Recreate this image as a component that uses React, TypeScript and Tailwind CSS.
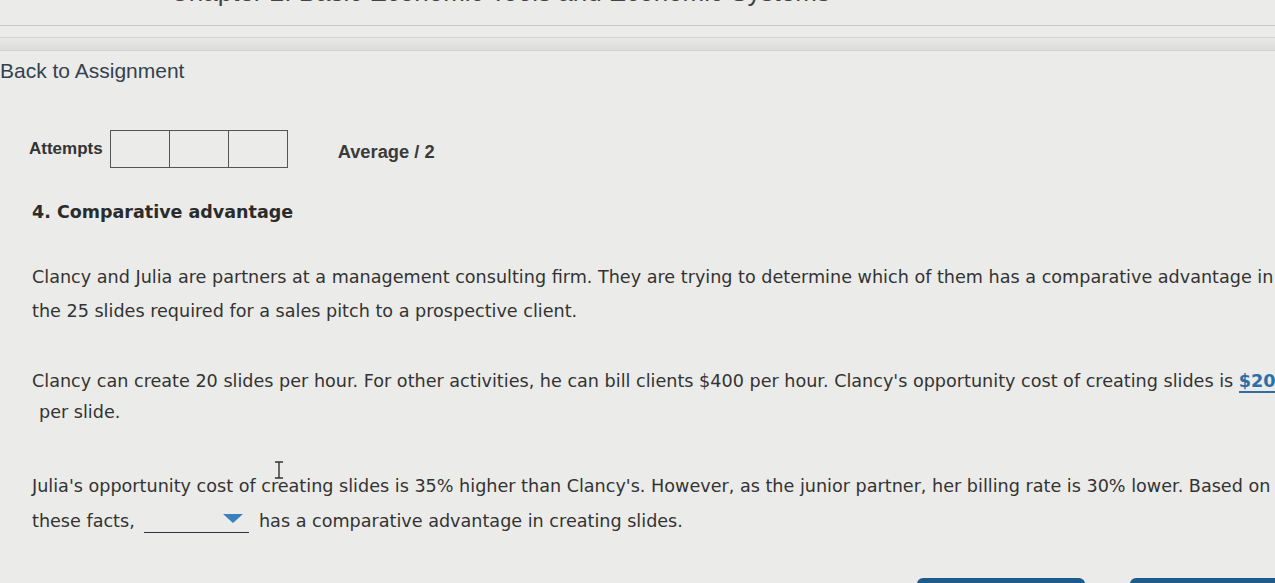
export default function App() {
  const body = "font-['DejaVu_Sans',Verdana,sans-serif] text-[17.6px] text-[#333]"

  return (
    <div className="relative h-[583px] w-[1275px] overflow-hidden bg-[#ebebe9]">
      {/* cut-off page title */}
      <div className="h-[26px] overflow-hidden border-b border-[#c9c9c7]">
        <div className="-mt-[21px] pl-[170px] font-['Liberation_Sans',Arial,sans-serif] text-[26px] leading-[26px] text-[#444]">
          Chapter 2: Basic Economic Tools and Economic Systems
        </div>
      </div>
      <div className="mt-[11px] h-[14px] border-y border-[#d2d2d0] bg-gradient-to-b from-[#e8e8e6] to-[#dcdcda]" />

      <div className="pt-[8px] font-['Liberation_Sans',Arial,sans-serif] text-[21px] leading-[24px] text-[#34424f]">
        Back to Assignment
      </div>

      <div className="mt-[47px] flex items-center pl-[29px]">
        <span className="font-['Liberation_Sans',Arial,sans-serif] text-[17px] font-bold text-[#333]">Attempts</span>
        <div className="ml-[7px] flex border border-[#555]">
          <div className="h-[36px] w-[59px] border-r border-[#555]" />
          <div className="h-[36px] w-[59px] border-r border-[#555]" />
          <div className="h-[36px] w-[58px]" />
        </div>
        <span className="ml-[50px] mt-[5px] font-['Liberation_Sans',Arial,sans-serif] text-[18.3px] font-bold text-[#3a3a3a]">
          Average / 2
        </span>
      </div>

      <div className="w-[1500px] pl-[32px]">
        <h2 className="mt-[32px] font-['DejaVu_Sans',Verdana,sans-serif] text-[17.5px] font-bold leading-[24px] text-[#2b2b2b]">
          4. Comparative advantage
        </h2>

        <p className={`${body} mt-[36px] leading-[34px]`}>
          Clancy and Julia are partners at a management consulting firm. They are trying to determine which of them has a comparative advantage in creating
          <br />
          the 25 slides required for a sales pitch to a prospective client.
        </p>

        <p className={`${body} mt-[38px] leading-[31px]`}>
          Clancy can create 20 slides per hour. For other activities, he can bill clients $400 per hour. Clancy's opportunity cost of creating slides is{" "}
          <span className="border-b-2 border-[#2f6e9e] font-bold text-[#2a6fa8]">$20</span>
          <br />
          <span className="pl-[7px]">per slide.</span>
        </p>

        <p className={`${body} mt-[41px] leading-[35px]`}>
          Julia's opportunity cost of creating slides is 35% higher than Clancy's. However, as the junior partner, her billing rate is 30% lower. Based on
          <br />
          these facts,{" "}
          <span className="relative ml-[4px] mr-[4px] inline-block h-[23px] w-[105px] translate-y-[6px] border-b border-[#334]">
            <svg className="absolute right-[6px] top-[4px]" width="20" height="9" viewBox="0 0 20 9">
              <path d="M0 0 H20 L10 9 Z" fill="#3a7fc0" />
            </svg>
          </span>{" "}
          has a comparative advantage in creating slides.
        </p>
      </div>

      {/* mouse I-beam cursor */}
      <svg className="absolute left-[273px] top-[461px]" width="12" height="18" viewBox="0 0 12 18">
        <path d="M2 1 H10 M6 1 V17 M2 17 H10" stroke="#333" strokeWidth="1.4" fill="none" />
      </svg>

      {/* buttons peeking at bottom */}
      <div className="absolute left-[917px] top-[578px] h-[20px] w-[168px] rounded-t-[6px] bg-[#1d5b8c]" />
      <div className="absolute left-[1130px] top-[578px] h-[20px] w-[168px] rounded-t-[6px] bg-[#1d5b8c]" />
    </div>
  )
}
